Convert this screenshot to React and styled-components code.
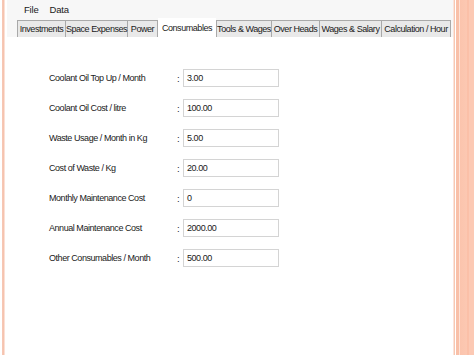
import React from 'react';
import styled, { createGlobalStyle } from 'styled-components';

const GlobalStyle = createGlobalStyle`
  html, body {
    margin: 0;
    padding: 0;
    background: #ffffff;
  }
  body {
    font-family: "Liberation Sans", Arial, sans-serif;
  }
`;

const Screen = styled.div`
  display: flex;
  width: 474px;
  height: 355px;
  overflow: hidden;
  background: #ffffff;
`;

const LeftEdge = styled.div`
  width: 7px;
  flex-shrink: 0;
  background: linear-gradient(
    to right,
    #fff 0px, #fff 2px,
    #f7c9b7 2px, #f5c2ad 4px,
    #fbe0d5 4px, #fbe0d5 5px,
    #fff 5px
  );
`;

const RightEdge = styled.div`
  width: 21px;
  flex-shrink: 0;
  background: linear-gradient(
    to right,
    #fbe4da 0px, #fbe4da 1px,
    #f8c7b2 1px, #f8c7b2 2px,
    #ffffff 2px, #ffffff 3px,
    #f9c0a8 3px, #f9c0a8 6px,
    #fde1d5 6px, #fde1d5 7px,
    #fbc4ad 7px, #fcc8b2 14px,
    #fbc0a8 14px, #fbc0a8 16px,
    #fcc9b4 16px, #fcc9b4 21px
  );
`;

const Window = styled.div`
  flex: 1;
  display: flex;
  flex-direction: column;
  font-family: "Liberation Sans", Arial, sans-serif;
  font-size: 9px;
  letter-spacing: -0.45px;
  color: #1a1a1a;
`;

const MenuBar = styled.div`
  height: 18px;
  display: flex;
  align-items: center;
  gap: 11px;
  padding-left: 17px;
  background: #f7f7f7;
`;

const MenuItem = styled.span`
  font-size: 9.5px;
  letter-spacing: -0.2px;
`;

const TabStrip = styled.div`
  display: flex;
  align-items: flex-end;
  height: 19px;
  padding-left: 10px;
  background: #f7f7f7;
`;

const Tab = styled.div`
  width: ${p => p.$width}px;
  height: ${p => (p.$active ? '19px' : '17px')};
  display: flex;
  align-items: center;
  justify-content: center;
  background: ${p => (p.$active ? '#ffffff' : '#e9e9e9')};
  border: 1px solid ${p => (p.$active ? '#ffffff' : '#a9a9a9')};
  border-left-width: ${p => (p.$first || p.$active || p.$afterActive ? '1px' : '0')};
  border-bottom: none;
  box-sizing: border-box;
  white-space: nowrap;
  font-size: 9px;
`;

const Panel = styled.div`
  flex: 1;
  background: #ffffff;
  padding: 32px 0 0 42px;
`;

const FormGrid = styled.div`
  display: grid;
  grid-template-columns: 128px 6px 96px;
  row-gap: 12px;
  align-items: center;
`;

const Label = styled.span`
  font-size: 9px;
`;

const Colon = styled.span`
  font-size: 9.5px;
`;

const Field = styled.div`
  height: 18px;
  border: 1px solid #d4d4d4;
  box-sizing: border-box;
  display: flex;
  align-items: center;
  padding-left: 3px;
  font-size: 9px;
  background: #fff;
`;

const tabs = [
  ['Investments', 49],
  ['Space Expenses', 62],
  ['Power', 30],
  ['Consumables', 58],
  ['Tools & Wages', 56],
  ['Over Heads', 48],
  ['Wages & Salary', 62],
  ['Calculation / Hour', 69],
];

const rows = [
  ['Coolant Oil Top Up / Month', '3.00'],
  ['Coolant Oil Cost / litre', '100.00'],
  ['Waste Usage / Month in Kg', '5.00'],
  ['Cost of Waste / Kg', '20.00'],
  ['Monthly Maintenance Cost', '0'],
  ['Annual Maintenance Cost', '2000.00'],
  ['Other Consumables / Month', '500.00'],
];

const App = () => {
  return (
    <>
      <GlobalStyle />
      <Screen>
        <LeftEdge />
        <Window>
          <MenuBar>
            <MenuItem>File</MenuItem>
            <MenuItem>Data</MenuItem>
          </MenuBar>
          <TabStrip>
            {tabs.map(([t, w], i) => (
              <Tab
                key={t}
                $width={w}
                $first={i === 0}
                $active={t === 'Consumables'}
                $afterActive={i > 0 && tabs[i - 1][0] === 'Consumables'}
              >
                {t}
              </Tab>
            ))}
          </TabStrip>
          <Panel>
            <FormGrid>
              {rows.map(([label, value]) => (
                <React.Fragment key={label}>
                  <Label>{label}</Label>
                  <Colon>:</Colon>
                  <Field>{value}</Field>
                </React.Fragment>
              ))}
            </FormGrid>
          </Panel>
        </Window>
        <RightEdge />
      </Screen>
    </>
  );
};

export default App;
